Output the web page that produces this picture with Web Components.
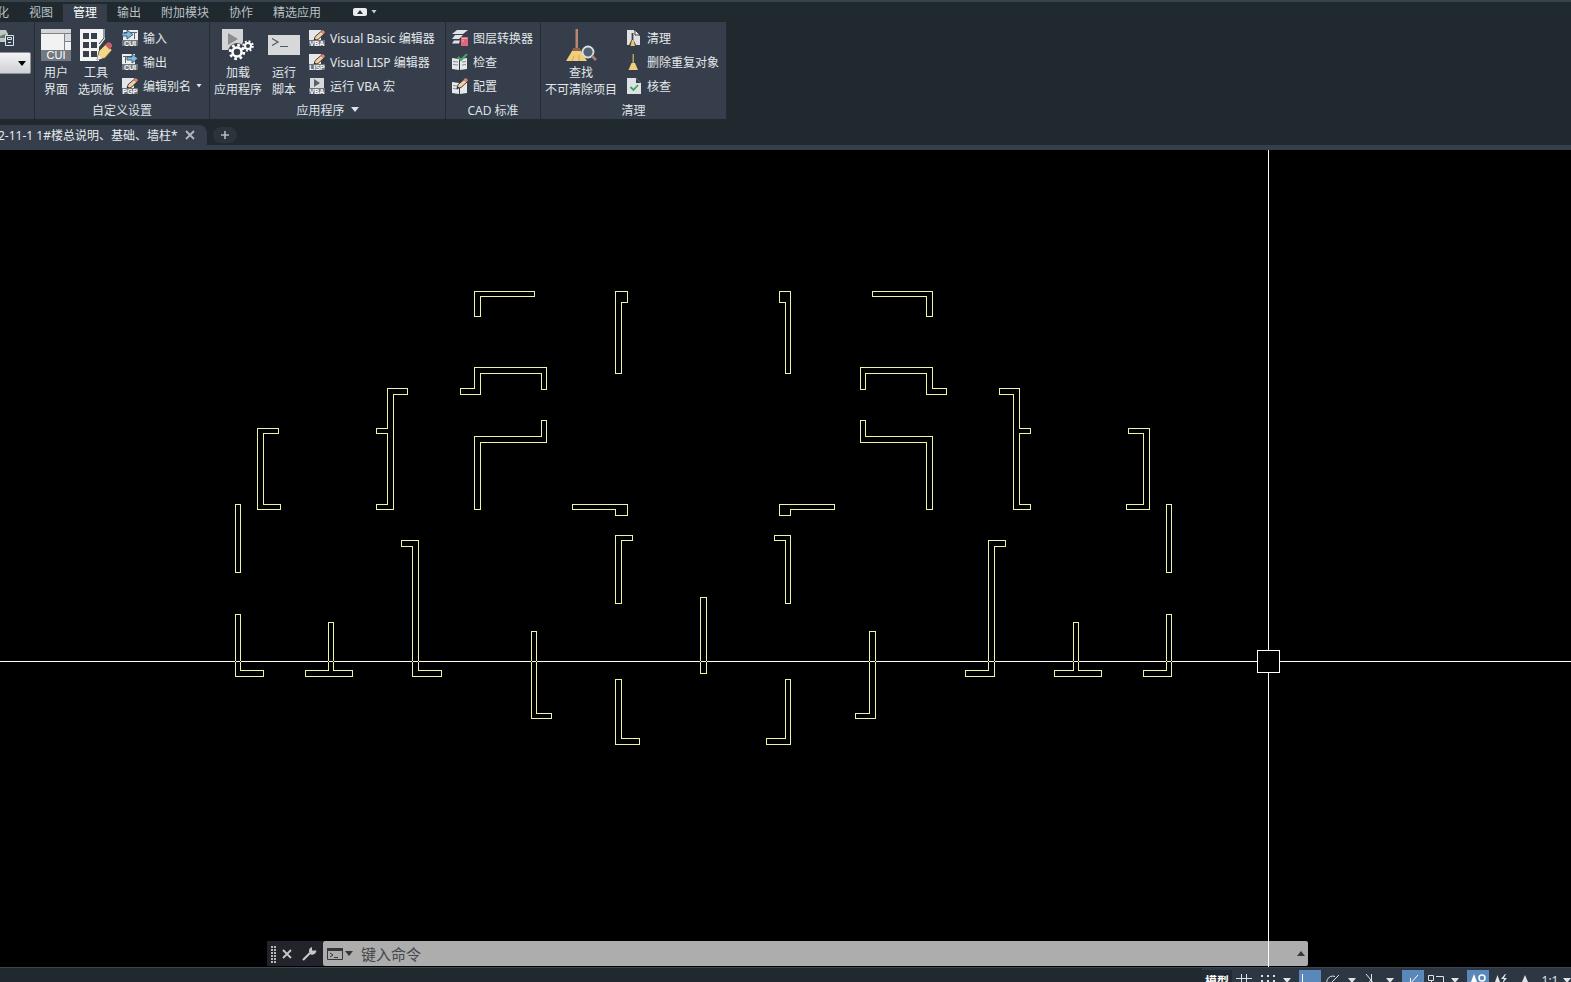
<!DOCTYPE html>
<html lang="zh-CN">
<head>
<meta charset="utf-8">
<title>CAD</title>
<style>
	html,
	body {
		margin: 0;
		height: 100%;
		overflow: hidden;
		background: #000;
	}
</style>
</head>
<body>
<cad-app></cad-app>

<script>
const FONT = '"Noto Sans", "Noto Sans CJK SC", sans-serif';

const PENCIL = `
	<path d="M5 10.500 6.200 6.500 12 1.500 15 4 9 9.500z" fill="#f3cfa2" stroke="#2f2a2c" stroke-width=".9"/>
	<path d="M11.500 2 13 .3q2-.3 3 2L14.500 4.300z" fill="#d9877c"/>
	<path d="M4.500 10.800 5.500 8.500 7.300 9.800z" fill="#2f2a2c"/>`;

const tag = (text) => `
	<rect x="0" y="10" width="16" height="6" fill="#6f757d"/>
	<text x="8" y="16" font-size="7" font-weight="700" text-anchor="middle" fill="#fff">${text}</text>`;

const BROOM = `
	<path d="M15.500 0h2.500v19h-2.500z" fill="#b98672"/>
	<path d="M13 19h7l1 3h-9z" fill="#8f5f4f"/>
	<path d="M12 22h9l6 10H6z" fill="#efce7c"/>
	<path d="M12 32l2-5M19 32v-6" stroke="#d0a850" stroke-width="1"/>`;

// name: [width, height, markup]
const ICONS = {
	cui: [30, 32, `
		<path d="M0 0h30v32H0z" fill="#f2f2f2"/>
		<path d="M0 0h30v4H0z" fill="#d2d4d6"/>
		<path d="M0 4.500h30M23.500 4v17M24 12.500h6" stroke="#7d838a" fill="none"/>
		<path d="M24 5h6v7h-6z" fill="#d9dbdd"/>
		<path d="M0 21h30v11H0z" fill="#737980"/>
		<text x="15" y="30" font-size="11" text-anchor="middle" fill="#fff">CUI</text>`],
	palettes: [32, 32, `
		<path d="M0 0h25v10l-6 8v14H0z" fill="#f4f4f4"/>
		<path d="M3 4h6v6H3zM11 4h6v6h-6zM3 13h6v6H3zM11 13h6v6h-6zM3 22h6v6H3zM11 22h6v6h-6z" fill="#373f4a"/>
		<path d="M24 0v9l-5 6" stroke="#373f4a" fill="none"/>
		<path d="M17 31l2-9 7-7 6 6-7 8z" fill="#f3d688" stroke="#574f48" stroke-width=".8"/>
		<path d="M25 16l2.500-2.500q3-1 5 3l-3 4z" fill="#c75f69"/>
		<path d="M17 31l1.500-5 3.500 3.500z" fill="#ecedee"/>`],
	import: [16, 16, `
		<path d="M1 0h15v10H1z" fill="#eceeef"/>
		<path d="M2 2.500h13M5.500 3v6M12.500 3v6" stroke="#5c646d"/>
		${tag("CUI")}
		<path d="M0 3h5V0l6 4.500L5 9V6H0z" fill="#7dbbe0" stroke="#28475c" stroke-width=".8"/>`],
	export: [16, 16, `
		<path d="M0 0h13v10H0z" fill="#eceeef"/>
		<path d="M1 2.500h11M3.500 3v6" stroke="#5c646d"/>
		${tag("CUI")}
		<path d="M5 3h5V0l6 4.500L10 9V6H5z" fill="#7dbbe0" stroke="#28475c" stroke-width=".8"/>`],
	pgp: [16, 16, `<path d="M0 0h12v10H0z" fill="#e6e7e8"/>${PENCIL}${tag("PGP")}`],
	vba: [16, 16, `<path d="M0 0h12v10H0z" fill="#e6e7e8"/>${PENCIL}${tag("VBA")}`],
	lisp: [16, 16, `<path d="M0 0h12v10H0z" fill="#e6e7e8"/>${PENCIL}${tag("LISP")}`],
	macro: [16, 16, `<path d="M1 0h14v10H1z" fill="#d7d9db"/><path d="M5 1l6 4-6 4z" fill="#59616a"/>${tag("VBA")}`],
	load: [32, 32, `
		<path d="M0 0h21v21H0z" fill="#d3d4d5"/>
		<path d="M6 4l10 6-10 6z" fill="#8b8e91"/>
		<circle cx="15" cy="23" r="9" fill="#353e4a"/>
		<circle cx="26" cy="17" r="6.500" fill="#353e4a"/>
		<circle cx="15" cy="23" r="4.500" fill="none" stroke="#fff" stroke-width="2.500"/>
		<circle cx="15" cy="23" r="6.800" fill="none" stroke="#fff" stroke-width="2.800" stroke-dasharray="2.670"/>
		<circle cx="26" cy="17" r="3" fill="none" stroke="#fff" stroke-width="2"/>
		<circle cx="26" cy="17" r="4.800" fill="none" stroke="#fff" stroke-width="2" stroke-dasharray="1.885"/>`],
	script: [32, 32, `
		<path d="M0 6h32v20H0z" fill="#d6d8d9"/>
		<path d="M4 9.500l6 3.500-6 3.500M12 17.500h8" fill="none" stroke="#53585e" stroke-width="1.200"/>`],
	layers: [16, 16, `
		<path d="M5 0h11l-5 4H0zM3 5h8l-4 4H0z" fill="#dfe2e6"/>
		<path d="M2 10.500h6l-1 3H0z" fill="#dfe2e6"/>
		<path d="M9 7h7v9H9z" fill="#e0677a"/>
		<path d="M10 8.500h5M10 11h2" stroke="#f4a9b3"/>`],
	check: [16, 16, `
		<path d="M0 4l7 1v11l-7-1zM15 4l-7 1v11l7-1z" fill="#e6e8e9"/>
		<path d="M1 7.500l5 .5M1 10.500l5 .5M10 8l4-.5M10 11l4-.5" stroke="#858c93"/>
		<path d="M6 3l3 3 6-6" fill="none" stroke="#47a867" stroke-width="2"/>`],
	config: [16, 16, `
		<path d="M0 4l7 1v11l-7-1zM15 4l-7 1v11l7-1z" fill="#e6e8e9"/>
		<path d="M1 7.500l4 .5M1 10.500l5 .5" stroke="#858c93"/>
		${PENCIL}`],
	find: [32, 32, `
		<g transform="translate(-5 0)">${BROOM}</g>
		<circle cx="23" cy="23" r="5.500" fill="#526170" stroke="#dce1e5" stroke-width="1.800"/>
		<path d="M27 27l4 4" stroke="#a9846c" stroke-width="2.500"/>`],
	purge: [16, 16, `
		<path d="M1 0h7l6 6v9H1z" fill="#dfe2e4"/>
		<path d="M9 0v5h5z" fill="#eef0f1" stroke="#353e4a"/>
		<path d="M6.500 3v7L3.500 16M6.500 10 9.500 16" stroke="#4a4039" stroke-width="1.800" fill="none"/>
		<path d="M6 10h1.500L9 16H4.500z" fill="#e9c678"/>`],
	overkill: [16, 16, `
		<path d="M6.500 0H8v10H6.500z" fill="#b99a62"/>
		<path d="M5.500 9H9l3 7H2.500z" fill="#efce7c"/>`],
	audit: [16, 16, `
		<path d="M1 0h9l5 5v11H1z" fill="#dfe2e4"/>
		<path d="M10 0v5h5z" fill="#353e4a"/>
		<path d="M4.500 9l3 3 4.500-5" fill="none" stroke="#38a560" stroke-width="1.800"/>`],
	tree: [14, 16, `
		<path d="M0 0h6l2 4v8H0z" fill="#c2c6c7"/>
		<path d="M0 6l5-2 3 4H0z" fill="#667b64"/>
		<path d="M5.500 5.500h8v10h-8z" fill="#34424f" stroke="#dce4ea"/>
		<path d="M7.500 7.500h4v2h-4zM8 12.500h3" stroke="#dce4ea" fill="none"/>`],
	restore: [14, 8, `<rect width="14" height="8" rx="2" fill="#e9ebed"/><path d="M4 6l3-4 3 4z" fill="#283138"/>`],
	down: [6, 4, `<path d="M.5 0h5L3 3.500z" fill="currentColor"/>`],
	drop: [8, 5, `<path d="M0 0h8L4 5z" fill="currentColor"/>`],
	close: [10, 10, `<path d="M1 1l8 8M9 1 1 9" stroke="currentColor" stroke-width="1.800"/>`],
	plus: [8, 8, `<path d="M4 0v8M0 4h8" stroke="currentColor" stroke-width="1.600"/>`],
	wrench: [15, 15, `
		<path d="M1 14 8 7" stroke="#c5c7c9" stroke-width="2.200"/>
		<path d="M7 6q-.5-4 3-5v3.500h4.500Q14 8 10 9q-2 0-3-3z" fill="#c5c7c9"/>`],
	prompt: [16, 12, `
		<path d="M.5.5h15v11H.500z" fill="none" stroke="#35373a"/>
		<path d="M0 0h16v3H0z" fill="#35373a"/>
		<path d="M3 5l3 2-3 2M7 9.500h4" fill="none" stroke="#35373a"/>`],
	grid: [16, 14, `<path d="M5.500 0v14M10.500 0v14M0 4.500h16M0 9.500h16" stroke="#dfe3e8"/>`],
	dots: [14, 14, `<path d="M0 1h2v2H0zM6 1h2v2H6zM12 1h2v2h-2zM0 6h2v2H0zM6 6h2v2H6zM12 6h2v2h-2zM0 11h2v2H0zM6 11h2v2H6zM12 11h2v2h-2z" fill="#dfe3e8"/>`],
	ortho: [16, 14, `<path d="M.5 0v11.500H16" fill="none" stroke="#fff"/>`],
	polar: [16, 14, `
		<path d="M13 11A6 6 0 1 1 10 2.500" fill="none" stroke="#dfe3e8"/>
		<path d="M7 8 14 1M7 8.500h9" stroke="#dfe3e8"/>`],
	iso: [12, 14, `<path d="M1 0l9 11M6.500 0v14M6 6 1 12" stroke="#dfe3e8" fill="none"/>`],
	track: [14, 14, `<path d="M3 11 12 1M4.500 4v6h6" stroke="#fff" fill="none"/>`],
	osnap: [16, 14, `
		<path d="M.5 1.500h5v5h-5z" fill="none" stroke="#dfe3e8"/>
		<path d="M8 2.500h7.500V14M3.500 7v7" fill="none" stroke="#dfe3e8"/>`],
	anno: [16, 14, `
		<path d="M4 0l3 8-3 6-3-6z" fill="#fff"/>
		<circle cx="12" cy="4" r="3" fill="none" stroke="#fff" stroke-width="1.500"/>`],
	autoscale: [14, 14, `
		<path d="M3.500 1 6 8l-2.500 6L1 8z" fill="#dfe3e8"/>
		<path d="M11 0 7 5h3l-2 5 5-6h-3l2-4z" fill="#dfe3e8"/>`],
	scale: [12, 14, `<path d="M6 1l3 7-3 6-3-6z" fill="#dfe3e8"/>`],
};

class CadIcon extends HTMLElement {
	connectedCallback() {
		const [w, h, body] = ICONS[this.getAttribute("name")];
		this.attachShadow({ mode: "open" }).innerHTML = `
			<style>
				:host { display: block; flex: none; }
				svg { display: block; font-family: "Liberation Sans", sans-serif; }
			</style>
			<svg width="${w}" height="${h}" viewBox="0 0 ${w} ${h}" aria-hidden="true">${body}</svg>
		`;
	}
}

// ribbon tab row
class RibbonTabs extends HTMLElement {
	connectedCallback() {
		const tabs = ["视图", "管理", "输出", "附加模块", "协作", "精选应用"];
		this.attachShadow({ mode: "open" }).innerHTML = `
			<style>
				:host {
					display: flex;
					height: 18px;
					padding-top: 2px;
					border-top: 2px solid #36424c;
					background: #1f292e;
				}

				button {
					padding: 0 10px;
					border: 0;
					background: none;
					color: #b9c0c6;
					font: inherit;
					line-height: 18px;
					white-space: nowrap;
				}

				/* scrolled partly out on the left */
				.cut {
					margin-left: -3px;
					padding-left: 0;
				}

				[aria-selected="true"] {
					background: #353e4a;
					color: #fff;
				}

				.mode {
					display: flex;
					align-items: center;
					gap: 4px;
					margin-left: 12px;
					padding-bottom: 2px;
					color: #c6ccd1;
				}
			</style>
			<button class="cut" type="button">化</button>
			${tabs.map((t) => `<button type="button" role="tab" aria-selected="${t === "管理"}">${t}</button>`).join("")}
			<button class="mode" type="button" aria-label="最小化功能区">
				<cad-icon name="restore"></cad-icon>
				<cad-icon name="down"></cad-icon>
			</button>
		`;
	}
}

class RibbonPanel extends HTMLElement {
	connectedCallback() {
		const more = this.hasAttribute("more");
		this.attachShadow({ mode: "open" }).innerHTML = `
			<style>
				:host {
					display: flex;
					flex-direction: column;
					box-sizing: border-box;
					border-right: 1px solid #232c35;
					padding-top: 4px;
				}

				.body {
					display: flex;
					gap: 2px;
					height: 72px;
					padding: 0 3px 0 2px;
				}

				.title {
					display: flex;
					justify-content: center;
					align-items: center;
					gap: 6px;
					height: 19px;
					padding-top: 2px;
					color: #dde2e7;
				}
			</style>
			<div class="body"><slot></slot></div>
			<div class="title">${this.getAttribute("label") || ""}${more ? '<cad-icon name="drop"></cad-icon>' : ""}</div>
		`;
	}
}

class RibbonButton extends HTMLElement {
	connectedCallback() {
		const more = this.hasAttribute("more");
		this.attachShadow({ mode: "open" }).innerHTML = `
			<style>
				:host { display: block; }

				button {
					display: flex;
					align-items: center;
					gap: 5px;
					height: 24px;
					padding: 0;
					border: 0;
					background: none;
					color: #e3e7eb;
					font: inherit;
					white-space: nowrap;
				}

				:host([large]) button {
					flex-direction: column;
					gap: 3px;
					width: 100%;
					height: 72px;
					padding-top: 3px;
					line-height: 17px;
				}
			</style>
			<button type="button">
				<cad-icon name="${this.getAttribute("icon")}"></cad-icon>
				<span><slot></slot></span>
				${more ? '<cad-icon name="down"></cad-icon>' : ""}
			</button>
		`;
	}
}

class CadRibbon extends HTMLElement {
	connectedCallback() {
		this.attachShadow({ mode: "open" }).innerHTML = `
			<style>
				:host {
					display: flex;
					background: #1f292e;
				}

				ribbon-panel { background: #353e4a; }
				.p175 { min-width: 175px; }
				.p236 { min-width: 236px; }
				.p95 { min-width: 95px; }
				.p186 { min-width: 186px; }
				.col { margin-left: 5px; }
				.list { margin-left: 4px; }
				.w36 { width: 36px; }
				.w38 { width: 38px; }
				.w52 { width: 52px; }
				.w76 { width: 76px; }

				.view {
					display: flex;
					flex-direction: column;
					gap: 6px;
					width: 31px;
					margin-left: -2px;
					padding-top: 4px;
				}

				select {
					appearance: none;
					width: 31px;
					height: 22px;
					border: 1px solid #8e939a;
					border-left: 0;
					border-radius: 0 2px 2px 0;
					background: linear-gradient(#f4f4f5, #cfd0d4);
				}

				.combo {
					display: grid;
					width: 31px;
				}

				.combo > * { grid-area: 1 / 1; }

				.combo cad-icon {
					place-self: center end;
					padding-right: 5px;
					color: #000;
					pointer-events: none;
				}
			</style>
			<ribbon-panel>
				<div class="view">
					<cad-icon name="tree"></cad-icon>
					<div class="combo">
						<select aria-label="列表"></select>
						<cad-icon name="drop"></cad-icon>
					</div>
				</div>
			</ribbon-panel>
			<ribbon-panel class="p175" label="自定义设置">
				<ribbon-button class="w38" large icon="cui">用户<br>界面</ribbon-button>
				<ribbon-button class="w38" large icon="palettes">工具<br>选项板</ribbon-button>
				<div class="col">
					<ribbon-button icon="import">输入</ribbon-button>
					<ribbon-button icon="export">输出</ribbon-button>
					<ribbon-button icon="pgp" more>编辑别名</ribbon-button>
				</div>
			</ribbon-panel>
			<ribbon-panel class="p236" label="应用程序" more>
				<ribbon-button class="w52" large icon="load">加载<br>应用程序</ribbon-button>
				<ribbon-button class="w36" large icon="script">运行<br>脚本</ribbon-button>
				<div class="col">
					<ribbon-button icon="vba">Visual Basic 编辑器</ribbon-button>
					<ribbon-button icon="lisp">Visual LISP 编辑器</ribbon-button>
					<ribbon-button icon="macro">运行 VBA 宏</ribbon-button>
				</div>
			</ribbon-panel>
			<ribbon-panel class="p95" label="CAD 标准">
				<div class="list">
					<ribbon-button icon="layers">图层转换器</ribbon-button>
					<ribbon-button icon="check">检查</ribbon-button>
					<ribbon-button icon="config">配置</ribbon-button>
				</div>
			</ribbon-panel>
			<ribbon-panel class="p186" label="清理">
				<ribbon-button class="w76" large icon="find">查找<br>不可清除项目</ribbon-button>
				<div class="col">
					<ribbon-button icon="purge">清理</ribbon-button>
					<ribbon-button icon="overkill">删除重复对象</ribbon-button>
					<ribbon-button icon="audit">核查</ribbon-button>
				</div>
			</ribbon-panel>
		`;
	}
}

// open drawings
class FileTabs extends HTMLElement {
	connectedCallback() {
		this.attachShadow({ mode: "open" }).innerHTML = `
			<style>
				:host {
					display: flex;
					align-items: center;
					height: 20px;
					padding-top: 6px;
					border-bottom: 5px solid #353e4a;
					background: #1f292e;
				}

				.tab {
					display: flex;
					align-items: center;
					gap: 7px;
					height: 20px;
					margin-left: -2px;
					padding-right: 12px;
					border-radius: 0 8px 0 0;
					background: #353e4a;
					color: #e6eaee;
					white-space: nowrap;
				}

				button {
					display: grid;
					place-items: center;
					padding: 0;
					border: 0;
					background: none;
					color: #b4bac1;
				}

				.add {
					width: 24px;
					height: 16px;
					margin-left: 6px;
					border-radius: 8px;
					background: #2a343a;
				}
			</style>
			<div class="tab">
				<span>2-11-1 1#楼总说明、基础、墙柱*</span>
				<button type="button" aria-label="关闭"><cad-icon name="close"></cad-icon></button>
			</div>
			<button class="add" type="button" aria-label="新图形"><cad-icon name="plus"></cad-icon></button>
		`;
	}
}

// wall outlines, model window coordinates
const WALLS = [
	"M474 291H534V296H480V316H474Z",
	"M257 428H278V433H263V504H280V509H257Z",
	"M387 388H407V394H393V509H376V504H387V433H376V428H387Z",
	"M460 388H474V367H546V389H541V373H480V394H460Z",
	"M541 420H546V442H480V509H474V436H541Z",
	"M235 504H240V572H235Z",
	"M235 614H240V670H263V676H235Z",
	"M328 622H333V670H352V676H305V670H328Z",
	"M401 540H418V670H441V676H412V546H401Z",
	"M531 631H536V713H551V718H531Z",
	"M615 291H627V302H621V373H615Z",
	"M779 291H790V373H785V302H779Z",
	"M872 291H932V316H926V296H872Z",
	"M860 367H932V388H946V394H926V373H865V389H860Z",
	"M860 420H865V436H932V509H926V442H860Z",
	"M572 504H627V515H615V509H572Z",
	"M779 504H834V509H790V515H779Z",
	"M615 535H632V540H621V603H615Z",
	"M774 535H790V603H785V540H774Z",
	"M700 597H706V673H700Z",
	"M615 679H621V738H639V744H615Z",
	"M785 679H790V744H766V738H785Z",
	"M869 631H875V718H855V713H869Z",
	"M999 388H1019V428H1030V433H1019V504H1030V509H1013V394H999Z",
	"M1128 428H1149V509H1126V504H1143V433H1128Z",
	"M1166 504H1171V572H1166Z",
	"M1166 614H1171V676H1143V670H1166Z",
	"M1073 622H1078V670H1101V676H1054V670H1073Z",
	"M988 540H1005V546H994V676H965V670H988Z",
];

class DrawingView extends HTMLElement {
	connectedCallback() {
		this.attachShadow({ mode: "open" }).innerHTML = `
			<style>
				:host {
					display: block;
					position: relative;
					min-height: 0;
					background: #000;
					overflow: hidden;
				}

				/* the crosshair runs over the command line too */
				svg {
					display: block;
					position: relative;
					z-index: 1;
					width: 100%;
					height: 100%;
					pointer-events: none;
				}

				path {
					fill: none;
					stroke: #f0f2a6;
				}

				.cursor {
					stroke: #fff;
					mix-blend-mode: difference;
				}

				::slotted(command-line) {
					position: absolute;
					left: 267px;
					right: 263px;
					bottom: 1px;
				}
			</style>
			<svg shape-rendering="crispEdges" role="img" aria-label="墙柱平面图">
				<g transform="translate(.5 -149.5)">
					${WALLS.map((d) => `<path d="${d}"/>`).join("")}
				</g>
				<path class="cursor" transform="translate(1268.5 511.5)" d="M-1269 0H-11M11 0H4000M0-512V-11M0 11V4000M-11-11h22v22h-22z"/>
			</svg>
			<slot></slot>
		`;
	}
}

class CommandLine extends HTMLElement {
	connectedCallback() {
		this.attachShadow({ mode: "open" }).innerHTML = `
			<style>
				:host {
					display: flex;
					height: 25px;
				}

				.tools {
					display: flex;
					align-items: center;
					gap: 5px;
					width: 52px;
					padding-left: 4px;
					background: #22232b;
				}

				.grip {
					width: 6px;
					height: 18px;
					background: linear-gradient(#22232b 1px, transparent 1px) 0 0 / 3px 3px,
						linear-gradient(90deg, #b6b8ba 2px, transparent 2px) 0 0 / 3px 3px;
				}

				button {
					display: flex;
					align-items: center;
					gap: 2px;
					padding: 0;
					border: 0;
					background: none;
					color: #c5c7c9;
				}

				.wrench { margin-left: 5px; }

				.entry {
					display: flex;
					flex: 1;
					align-items: center;
					gap: 8px;
					padding: 0 3px 0 4px;
					border-radius: 2px;
					background: #adadad;
				}

				.entry button { color: #35373a; }
				.up { transform: rotate(180deg); }

				input {
					flex: 1;
					min-width: 0;
					padding: 0;
					border: 0;
					background: none;
					color: #35373a;
					font: inherit;
					font-size: 15px;
					line-height: 24px;
				}

				input::placeholder {
					color: #45474a;
					opacity: 1;
				}
			</style>
			<div class="tools">
				<span class="grip"></span>
				<button type="button" aria-label="关闭"><cad-icon name="close"></cad-icon></button>
				<button class="wrench" type="button" aria-label="自定义"><cad-icon name="wrench"></cad-icon></button>
			</div>
			<div class="entry">
				<button type="button" aria-label="最近使用的命令">
					<cad-icon name="prompt"></cad-icon>
					<cad-icon name="drop"></cad-icon>
				</button>
				<input type="text" placeholder="键入命令" aria-label="键入命令">
				<button class="up" type="button" aria-label="命令历史"><cad-icon name="drop"></cad-icon></button>
			</div>
		`;
	}
}

class StatusBar extends HTMLElement {
	connectedCallback() {
		// [icon, on, has menu]
		const toggles = [
			["grid"],
			["dots", false, true],
			["ortho", true],
			["polar", false, true],
			["iso", false, true],
			["track", true],
			["osnap", false, true],
			["anno", true],
			["autoscale"],
			["scale"],
		];
		this.attachShadow({ mode: "open" }).innerHTML = `
			<style>
				:host {
					display: flex;
					justify-content: flex-end;
					height: 25px;
					border-top: 1px solid #3c4650;
					background: #1f292e;
				}

				.bar {
					display: flex;
					align-items: center;
					background: #2d3743;
				}

				button {
					display: grid;
					place-items: center;
					width: 24px;
					height: 22px;
					padding: 0;
					border: 0;
					background: none;
					color: #dfe3e8;
					font: inherit;
				}

				.model {
					width: 30px;
					background: #222b35;
					color: #fff;
					font-weight: 700;
				}

				.on {
					width: 22px;
					background: #5b88ba;
				}

				.menu { width: 14px; }
				.menu + .on { margin-left: 5px; }
				.scale { width: 26px; }
				.last { width: 8px; }
			</style>
			<div class="bar">
				<button class="model" type="button">模型</button>
				${toggles.map(([icon, on, menu]) => `
					<button type="button" class="${on ? "on" : ""}" aria-pressed="${!!on}" aria-label="${icon}"><cad-icon name="${icon}"></cad-icon></button>
					${menu ? '<button type="button" class="menu" aria-label="菜单"><cad-icon name="drop"></cad-icon></button>' : ""}
				`).join("")}
				<button class="scale" type="button">1:1</button>
				<button class="last" type="button" aria-label="菜单"><cad-icon name="drop"></cad-icon></button>
			</div>
		`;
	}
}

class CadApp extends HTMLElement {
	connectedCallback() {
		this.attachShadow({ mode: "open" }).innerHTML = `
			<style>
				/* the status bar runs past the lower edge of the window */
				:host {
					display: grid;
					grid-template-rows: auto auto auto 1fr auto;
					height: calc(100vh + 11px);
					font-family: ${FONT};
					font-size: 12px;
				}
			</style>
			<ribbon-tabs></ribbon-tabs>
			<cad-ribbon></cad-ribbon>
			<file-tabs></file-tabs>
			<drawing-view><command-line></command-line></drawing-view>
			<status-bar></status-bar>
		`;
	}
}

customElements.define("cad-icon", CadIcon);
customElements.define("ribbon-tabs", RibbonTabs);
customElements.define("ribbon-panel", RibbonPanel);
customElements.define("ribbon-button", RibbonButton);
customElements.define("cad-ribbon", CadRibbon);
customElements.define("file-tabs", FileTabs);
customElements.define("drawing-view", DrawingView);
customElements.define("command-line", CommandLine);
customElements.define("status-bar", StatusBar);
customElements.define("cad-app", CadApp);
</script>
</body>
</html>
